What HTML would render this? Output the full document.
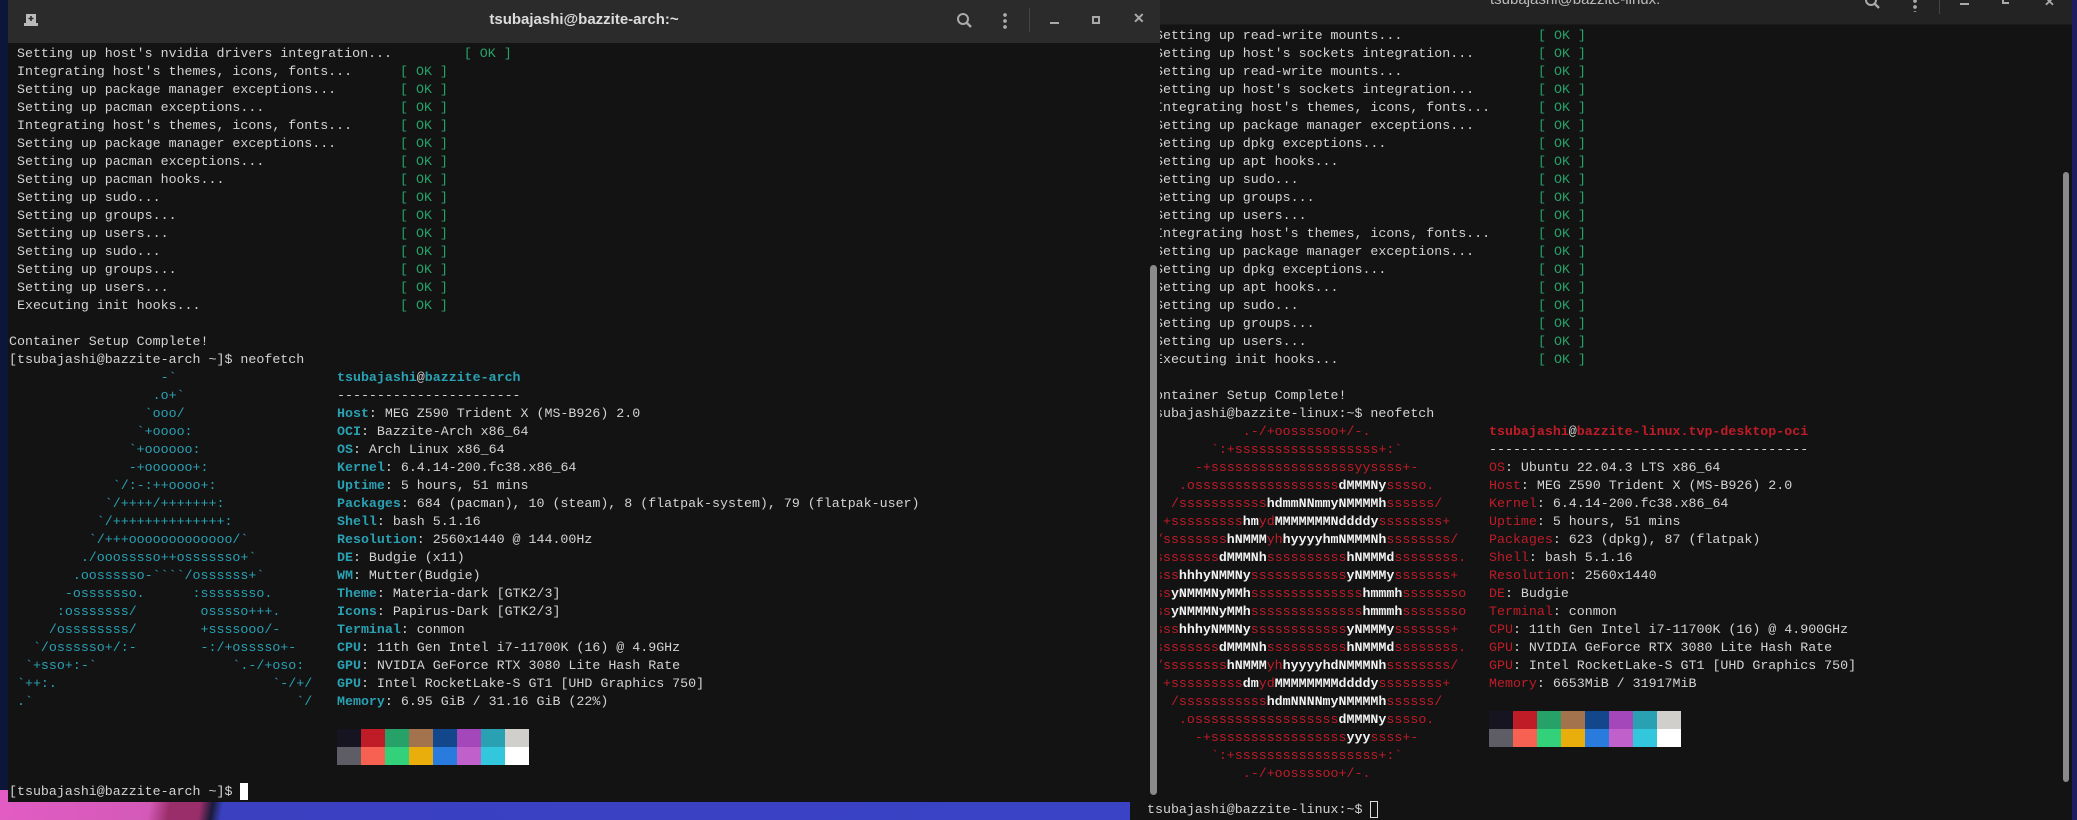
<!DOCTYPE html>
<html><head><meta charset="utf-8"><style>
*{margin:0;padding:0;box-sizing:border-box}
html,body{width:2077px;height:820px;overflow:hidden;background:#0c1638;position:relative}
.wall{position:absolute;left:0;top:790px;width:1140px;height:30px;background:linear-gradient(100deg,#e25cc4 0,#d45ab8 150px,#9a2e6a 170px,#9a2e6a 200px,#1a1a3a 212px,#3a40c0 222px,#3a42c6 100%)}
.win{position:absolute;background:#131313;overflow:hidden}
pre{position:absolute;font-family:"Liberation Mono",monospace;font-size:13.3px;line-height:18px;color:#d4d4d4;white-space:pre}
.g{color:#26a269}
.c{color:#2aa1b3}
.cb{color:#2aa1b3;font-weight:bold}
.r{color:#c01c28}
.rr{color:#c01c28}
.rr b{color:#f2f2f2}
.tb{position:absolute;left:0;top:0;width:100%}
.title{position:absolute;font-family:"Liberation Sans",sans-serif;font-weight:bold;font-size:15px;color:#dcdcdc;white-space:nowrap}
.pal{position:absolute;display:grid;grid-template-columns:repeat(8,24px);grid-auto-rows:18px}
.sb{position:absolute;background:#8a8a8a;border-radius:4px}
.cur{display:inline-block;width:8px;height:17px;background:#fff;vertical-align:top}
.cur2{display:inline-block;width:8px;height:17px;border:1px solid #ddd;vertical-align:top}
</style></head><body>
<div class="wall"></div>
<div style="position:absolute;left:2070px;top:0;width:7px;height:820px;background:#1d1d60"></div>

<!-- RIGHT WINDOW -->
<div class="win" style="left:1130px;top:0;width:942px;height:820px">
  <div class="tb" style="height:25px;background:#232323;border-bottom:1px solid #1a1a1a"></div>
  <div class="title" style="left:360px;top:-9px;font-weight:normal;color:#bbb">tsubajashi@bazzite-linux:~</div>
  <svg style="position:absolute;left:733px;top:-8px" width="20" height="20" viewBox="0 0 20 20"><circle cx="8" cy="8" r="5" fill="none" stroke="#aaa" stroke-width="2"/><path d="M11.5 11.5L16 16" stroke="#aaa" stroke-width="2.4"/></svg>
  <div style="position:absolute;left:783px;top:0;width:4px;height:12px;background:radial-gradient(circle,#aaa 1.7px,transparent 2px) 0 -2px/4px 6px"></div>
  <div style="position:absolute;left:809px;top:0;width:1px;height:14px;background:#444"></div>
  <div style="position:absolute;left:830px;top:3px;width:9px;height:2px;background:#aaa"></div>
  <div style="position:absolute;left:872px;top:-3px;width:7px;height:7px;border-left:2px solid #aaa;border-bottom:2px solid #aaa"></div>
  <div style="position:absolute;left:914px;top:-6px;color:#aaa;font:bold 13px 'Liberation Sans',sans-serif">✕</div>
  <div class="sb" style="left:933px;top:172px;width:6px;height:610px"></div>
</div>
<pre style="left:1147px;top:27px"> Setting up read-write mounts...                 <span class="g">[ OK ]</span>
 Setting up host's sockets integration...        <span class="g">[ OK ]</span>
 Setting up read-write mounts...                 <span class="g">[ OK ]</span>
 Setting up host's sockets integration...        <span class="g">[ OK ]</span>
 Integrating host's themes, icons, fonts...      <span class="g">[ OK ]</span>
 Setting up package manager exceptions...        <span class="g">[ OK ]</span>
 Setting up dpkg exceptions...                   <span class="g">[ OK ]</span>
 Setting up apt hooks...                         <span class="g">[ OK ]</span>
 Setting up sudo...                              <span class="g">[ OK ]</span>
 Setting up groups...                            <span class="g">[ OK ]</span>
 Setting up users...                             <span class="g">[ OK ]</span>
 Integrating host's themes, icons, fonts...      <span class="g">[ OK ]</span>
 Setting up package manager exceptions...        <span class="g">[ OK ]</span>
 Setting up dpkg exceptions...                   <span class="g">[ OK ]</span>
 Setting up apt hooks...                         <span class="g">[ OK ]</span>
 Setting up sudo...                              <span class="g">[ OK ]</span>
 Setting up groups...                            <span class="g">[ OK ]</span>
 Setting up users...                             <span class="g">[ OK ]</span>
 Executing init hooks...                         <span class="g">[ OK ]</span>

Container Setup Complete!
tsubajashi@bazzite-linux:~$ neofetch
<span class="rr">            .-/+oossssoo+/-.
        &#96;:+ssssssssssssssssss+:&#96;
      -+ssssssssssssssssssyyssss+-
    .ossssssssssssssssss<b>dMMMNy</b>sssso.
   /sssssssssss<b>hdmmNNmmyNMMMMh</b>ssssss/
  +sssssssss<b>hm</b>yd<b>MMMMMMMNddddy</b>ssssssss+
 /ssssssss<b>hNMMM</b>yh<b>hyyyyhmNMMMNh</b>ssssssss/
.ssssssss<b>dMMMNh</b>ssssssssss<b>hNMMMd</b>ssssssss.
+sss<b>hhhyNMMNy</b>ssssssssssss<b>yNMMMy</b>sssssss+
oss<b>yNMMMNyMMh</b>ssssssssssssss<b>hmmmh</b>ssssssso
oss<b>yNMMMNyMMh</b>ssssssssssssss<b>hmmmh</b>ssssssso
+sss<b>hhhyNMMNy</b>ssssssssssss<b>yNMMMy</b>sssssss+
.ssssssss<b>dMMMNh</b>ssssssssss<b>hNMMMd</b>ssssssss.
 /ssssssss<b>hNMMM</b>yh<b>hyyyyhdNMMMNh</b>ssssssss/
  +sssssssss<b>dm</b>yd<b>MMMMMMMMddddy</b>ssssssss+
   /sssssssssss<b>hdmNNNNmyNMMMMh</b>ssssss/
    .ossssssssssssssssss<b>dMMMNy</b>sssso.
      -+sssssssssssssssss<b>yyy</b>ssss+-
        &#96;:+ssssssssssssssssss+:&#96;
            .-/+oossssoo+/-.</span>

tsubajashi@bazzite-linux:~$ <span class="cur2"></span></pre>
<pre style="left:1489px;top:423px"><span class="cb" style="color:#c01c28">tsubajashi</span>@<span class="cb" style="color:#c01c28">bazzite-linux.tvp-desktop-oci</span>
----------------------------------------
<span class="r">OS</span>: Ubuntu 22.04.3 LTS x86_64
<span class="r">Host</span>: MEG Z590 Trident X (MS-B926) 2.0
<span class="r">Kernel</span>: 6.4.14-200.fc38.x86_64
<span class="r">Uptime</span>: 5 hours, 51 mins
<span class="r">Packages</span>: 623 (dpkg), 87 (flatpak)
<span class="r">Shell</span>: bash 5.1.16
<span class="r">Resolution</span>: 2560x1440
<span class="r">DE</span>: Budgie
<span class="r">Terminal</span>: conmon
<span class="r">CPU</span>: 11th Gen Intel i7-11700K (16) @ 4.900GHz
<span class="r">GPU</span>: NVIDIA GeForce RTX 3080 Lite Hash Rate
<span class="r">GPU</span>: Intel RocketLake-S GT1 [UHD Graphics 750]
<span class="r">Memory</span>: 6653MiB / 31917MiB</pre>
<div class="pal" style="left:1489px;top:711px">
<i style="background:#171421"></i><i style="background:#c01c28"></i><i style="background:#26a269"></i><i style="background:#a2734c"></i><i style="background:#12488b"></i><i style="background:#a347ba"></i><i style="background:#2aa1b3"></i><i style="background:#d0cfcc"></i>
<i style="background:#5e5c64"></i><i style="background:#f66151"></i><i style="background:#33d17a"></i><i style="background:#e9ad0c"></i><i style="background:#2a7bde"></i><i style="background:#c061cb"></i><i style="background:#33c7de"></i><i style="background:#ffffff"></i>
</div>

<!-- LEFT WINDOW -->
<div class="win" style="left:8px;top:0;width:1152px;height:802px;z-index:2">
  <div class="tb" style="height:43px;background:#2b2b2b"></div>
  <svg style="position:absolute;left:16px;top:13px" width="14" height="14" viewBox="0 0 14 14"><path d="M2 1h10v9h2v3H0v-3h2z" fill="#bbb"/><path d="M7 3v5M4.5 5.5h5" stroke="#2b2b2b" stroke-width="1.6"/></svg>
  <div class="title" style="left:0;width:1152px;text-align:center;top:11px">tsubajashi@bazzite-arch:~</div>
  <svg style="position:absolute;left:947px;top:11px" width="20" height="20" viewBox="0 0 20 20"><circle cx="8" cy="8" r="5" fill="none" stroke="#aaa" stroke-width="2"/><path d="M11.5 11.5L16 16" stroke="#aaa" stroke-width="2.4"/></svg>
  <div style="position:absolute;left:995px;top:12px;width:4px;height:18px;background:radial-gradient(circle,#aaa 1.7px,transparent 2px) 0 0/4px 6px"></div>
  <div style="position:absolute;left:1021px;top:8px;width:1px;height:24px;background:#444"></div>
  <div style="position:absolute;left:1042px;top:22px;width:9px;height:2px;background:#aaa"></div>
  <div style="position:absolute;left:1084px;top:16px;width:8px;height:8px;border-top:2px solid #aaa;border-right:2px solid #aaa;clip-path:polygon(0 0,100% 0,100% 100%,70% 100%,70% 30%,0 30%)"></div>
  <div style="position:absolute;left:1084px;top:16px;width:8px;height:8px;border-left:2px solid #aaa;border-bottom:2px solid #aaa;clip-path:polygon(0 0,30% 0,30% 70%,100% 70%,100% 100%,0 100%)"></div>
  <div style="position:absolute;left:1125px;top:10px;color:#aaa;font:bold 14px 'Liberation Sans',sans-serif">✕</div>
  <div class="sb" style="left:1142px;top:265px;width:7px;height:530px"></div>
</div>
<pre style="left:9px;top:45px;z-index:3"> Setting up host's nvidia drivers integration...         <span class="g">[ OK ]</span>
 Integrating host's themes, icons, fonts...      <span class="g">[ OK ]</span>
 Setting up package manager exceptions...        <span class="g">[ OK ]</span>
 Setting up pacman exceptions...                 <span class="g">[ OK ]</span>
 Integrating host's themes, icons, fonts...      <span class="g">[ OK ]</span>
 Setting up package manager exceptions...        <span class="g">[ OK ]</span>
 Setting up pacman exceptions...                 <span class="g">[ OK ]</span>
 Setting up pacman hooks...                      <span class="g">[ OK ]</span>
 Setting up sudo...                              <span class="g">[ OK ]</span>
 Setting up groups...                            <span class="g">[ OK ]</span>
 Setting up users...                             <span class="g">[ OK ]</span>
 Setting up sudo...                              <span class="g">[ OK ]</span>
 Setting up groups...                            <span class="g">[ OK ]</span>
 Setting up users...                             <span class="g">[ OK ]</span>
 Executing init hooks...                         <span class="g">[ OK ]</span>

Container Setup Complete!
[tsubajashi@bazzite-arch ~]$ neofetch
<span class="c">                   -&#96;
                  .o+&#96;
                 &#96;ooo/
                &#96;+oooo:
               &#96;+oooooo:
               -+oooooo+:
             &#96;/:-:++oooo+:
            &#96;/++++/+++++++:
           &#96;/++++++++++++++:
          &#96;/+++ooooooooooooo/&#96;
         ./ooosssso++osssssso+&#96;
        .oossssso-&#96;&#96;&#96;&#96;/ossssss+&#96;
       -osssssso.      :ssssssso.
      :osssssss/        osssso+++.
     /ossssssss/        +ssssooo/-
   &#96;/ossssso+/:-        -:/+osssso+-
  &#96;+sso+:-&#96;                 &#96;.-/+oso:
 &#96;++:.                           &#96;-/+/
 .&#96;                                 &#96;/</span>




[tsubajashi@bazzite-arch ~]$ <span class="cur"></span></pre>
<pre style="left:337px;top:369px;z-index:3"><span class="cb">tsubajashi</span>@<span class="cb">bazzite-arch</span>
-----------------------
<span class="cb">Host</span>: MEG Z590 Trident X (MS-B926) 2.0
<span class="cb">OCI</span>: Bazzite-Arch x86_64
<span class="cb">OS</span>: Arch Linux x86_64
<span class="cb">Kernel</span>: 6.4.14-200.fc38.x86_64
<span class="cb">Uptime</span>: 5 hours, 51 mins
<span class="cb">Packages</span>: 684 (pacman), 10 (steam), 8 (flatpak-system), 79 (flatpak-user)
<span class="cb">Shell</span>: bash 5.1.16
<span class="cb">Resolution</span>: 2560x1440 @ 144.00Hz
<span class="cb">DE</span>: Budgie (x11)
<span class="cb">WM</span>: Mutter(Budgie)
<span class="cb">Theme</span>: Materia-dark [GTK2/3]
<span class="cb">Icons</span>: Papirus-Dark [GTK2/3]
<span class="cb">Terminal</span>: conmon
<span class="cb">CPU</span>: 11th Gen Intel i7-11700K (16) @ 4.9GHz
<span class="cb">GPU</span>: NVIDIA GeForce RTX 3080 Lite Hash Rate
<span class="cb">GPU</span>: Intel RocketLake-S GT1 [UHD Graphics 750]
<span class="cb">Memory</span>: 6.95 GiB / 31.16 GiB (22%)</pre>
<div class="pal" style="left:337px;top:729px;z-index:3">
<i style="background:#171421"></i><i style="background:#c01c28"></i><i style="background:#26a269"></i><i style="background:#a2734c"></i><i style="background:#12488b"></i><i style="background:#a347ba"></i><i style="background:#2aa1b3"></i><i style="background:#d0cfcc"></i>
<i style="background:#5e5c64"></i><i style="background:#f66151"></i><i style="background:#33d17a"></i><i style="background:#e9ad0c"></i><i style="background:#2a7bde"></i><i style="background:#c061cb"></i><i style="background:#33c7de"></i><i style="background:#ffffff"></i>
</div>
</body></html>
